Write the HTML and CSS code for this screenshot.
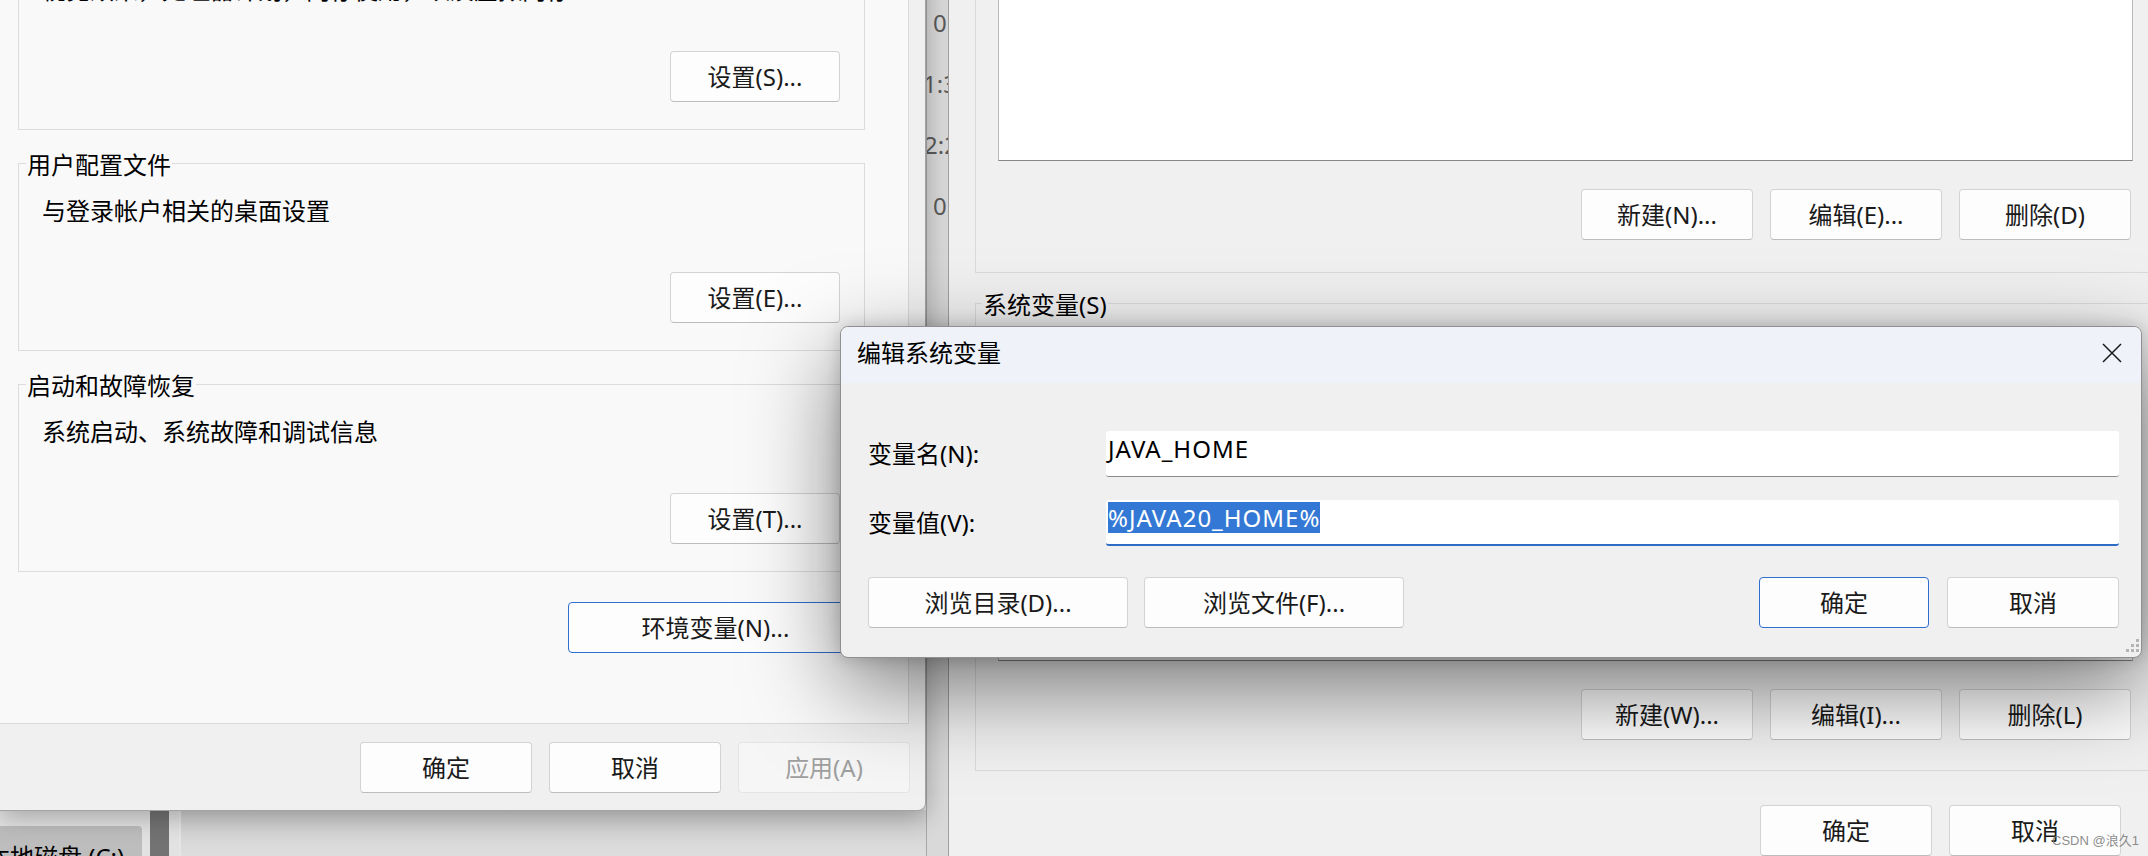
FILE: index.html
```html
<!DOCTYPE html>
<html lang="zh-CN">
<head>
<meta charset="utf-8">
<title>编辑系统变量</title>
<link rel="stylesheet" href="styles.css">
</head>
<body>
<div class="bgwin">
  <div class="bgmain">
    <div class="bgbottom">
      <div class="drive">本地磁盘 (C:)</div>
      <div class="split"></div>
      <div class="rest"></div>
    </div>
  </div>
  <div class="timecol">
    <div class="tl i1">0:</div>
    <div class="tl i2">1:3</div>
    <div class="tl i3">2:2</div>
    <div class="tl i1">0:</div>
  </div>
</div>

<div class="sysprop">
  <div class="tabpage">
    <div class="sp-group">
      <div class="group-title">性能</div>
      <div class="desc">视觉效果，处理器计划，内存使用，以及虚拟内存</div>
      <button class="btn set">设置(S)...</button>
    </div>
    <div class="sp-group">
      <div class="group-title">用户配置文件</div>
      <div class="desc">与登录帐户相关的桌面设置</div>
      <button class="btn set">设置(E)...</button>
    </div>
    <div class="sp-group">
      <div class="group-title">启动和故障恢复</div>
      <div class="desc">系统启动、系统故障和调试信息</div>
      <button class="btn set">设置(T)...</button>
    </div>
    <div class="envrow">
      <button class="btn btn-default envbtn">环境变量(N)...</button>
    </div>
  </div>
  <div class="sp-footer">
    <button class="btn fbtn">确定</button>
    <button class="btn fbtn">取消</button>
    <button class="btn fbtn disabled">应用(A)</button>
  </div>
</div>

<div class="envdlg">
  <div class="ev-group g1">
    <div class="group-title">用户变量(U)</div>
    <div class="listbox lb1"></div>
    <div class="btnrow">
      <button class="btn ebtn">新建(N)...</button>
      <button class="btn ebtn">编辑(E)...</button>
      <button class="btn ebtn">删除(D)</button>
    </div>
  </div>
  <div class="ev-group g2">
    <div class="group-title">系统变量(S)</div>
    <div class="listbox lb2"></div>
    <div class="btnrow">
      <button class="btn ebtn">新建(W)...</button>
      <button class="btn ebtn">编辑(I)...</button>
      <button class="btn ebtn">删除(L)</button>
    </div>
  </div>
  <div class="ev-footer">
    <button class="btn ebtn">确定</button>
    <button class="btn ebtn">取消</button>
  </div>
</div>

<div class="editdlg">
  <div class="titlebar">
    <span class="title">编辑系统变量</span>
    <svg class="close" width="20" height="20" viewBox="0 0 20 20"><path d="M1 1L19 19M19 1L1 19" stroke="#1a1a1a" stroke-width="1.5" fill="none"/></svg>
  </div>
  <div class="edit-body">
    <div class="row">
      <div class="lbl">变量名(N):</div>
      <div class="field">JAVA_HOME</div>
    </div>
    <div class="row row2">
      <div class="lbl">变量值(V):</div>
      <div class="field focus"><span class="sel">%JAVA20_HOME%</span></div>
    </div>
    <div class="edit-btns">
      <button class="btn wide">浏览目录(D)...</button>
      <button class="btn wide">浏览文件(F)...</button>
      <div class="spacer"></div>
      <button class="btn btn-default ok">确定</button>
      <button class="btn cancel">取消</button>
    </div>
  </div>
  <svg class="grip" width="15" height="15" viewBox="0 0 15 15">
    <rect x="12" y="2" width="3" height="3" fill="#b4b4b4"/>
    <rect x="7" y="7" width="3" height="3" fill="#b4b4b4"/>
    <rect x="12" y="7" width="3" height="3" fill="#b4b4b4"/>
    <rect x="2" y="12" width="3" height="3" fill="#b4b4b4"/>
    <rect x="7" y="12" width="3" height="3" fill="#b4b4b4"/>
    <rect x="12" y="12" width="3" height="3" fill="#b4b4b4"/>
  </svg>
</div>

<div class="watermark">CSDN @浪久1</div>
</body>
</html>
```

FILE: styles.css
```css
* { box-sizing: border-box; }
html, body { margin: 0; }
body {
  width: 2148px;
  height: 856px;
  overflow: hidden;
  position: relative;
  background: #dcdcdc;
  font-family: "Noto Sans", "Noto Sans CJK SC", sans-serif;
  font-size: 24px;
  line-height: 34px;
  color: #000;
}

/* ---------- buttons ---------- */
.btn {
  font: inherit;
  line-height: 34px;
  color: #1a1a1a;
  height: 51px;
  padding: 0;
  background: #fdfdfd;
  border: 1px solid #d3d3d3;
  border-bottom-color: #bcbcbc;
  border-radius: 4px;
  display: flex;
  align-items: center;
  justify-content: center;
  white-space: nowrap;
}
.btn-default { border-color: #2f6fcf; }
.btn.disabled {
  background: #f6f6f6;
  border-color: #e4e4e4;
  color: #9f9f9f;
}

/* ---------- background window ---------- */
.bgwin {
  position: absolute;
  left: 0;
  top: 0;
  width: 948px;
  height: 856px;
  display: flex;
}
.bgmain {
  flex: 1;
  display: flex;
  flex-direction: column;
  justify-content: flex-end;
  background: #e2e2e2;
}
.bgbottom {
  height: 46px;
  display: flex;
}
.drive {
  width: 142px;
  margin-top: 16px;
  padding-top: 14px;
  background: #bdbdbd;
  border-top-right-radius: 4px;
  text-indent: -14px;
  white-space: nowrap;
  overflow: hidden;
}
.split {
  width: 19px;
  margin-left: 8px;
  background: #737373;
}
.rest {
  flex: 1;
  margin-left: 10px;
  border-left: 2px solid #e6e6e6;
  background: linear-gradient(#cdcdcd, #dedede);
}
.timecol {
  width: 22px;
  background: #d9d9d9;
  border-left: 1px solid #a8a8a8;
  overflow: hidden;
  color: #5a5a5a;
}
.tl {
  height: 61px;
  line-height: 61px;
  white-space: nowrap;
}
.tl:first-child { margin-top: -8px; }
.tl.i1 { text-indent: 6px; }
.tl.i2 { text-indent: -4px; }
.tl.i3 { text-indent: -3px; }

/* ---------- system properties dialog ---------- */
.sysprop {
  position: absolute;
  left: 0;
  top: -100px;
  width: 926px;
  background: #f0f0f0;
  border-right: 1px solid #a3a3a3;
  border-bottom: 1px solid #a3a3a3;
  border-bottom-right-radius: 8px;
  box-shadow: 0 6px 26px rgba(0, 0, 0, 0.28);
}
.tabpage {
  width: 909px;
  background: #f9f9f9;
  border-right: 1px solid #dadada;
  border-bottom: 1px solid #dadada;
  padding-top: 42px;
  padding-bottom: 70px;
}
.sp-group {
  position: relative;
  margin-left: 18px;
  width: 847px;
  height: 188px;
  border: 1px solid #dcdcdc;
  padding: 30px 24px 27px 23px;
  display: flex;
  flex-direction: column;
}
.sp-group + .sp-group { margin-top: 33px; }
.group-title {
  position: absolute;
  top: -16px;
  left: 7px;
  padding: 0 1px;
  line-height: 34px;
  white-space: nowrap;
}
.sp-group .group-title { background: #f9f9f9; }
.desc { white-space: nowrap; }
.btn.set {
  width: 170px;
  margin-top: auto;
  align-self: flex-end;
}
.envrow {
  margin-top: 30px;
  display: flex;
  justify-content: flex-end;
  padding-right: 45px;
}
.envbtn { width: 295px; }
.sp-footer {
  display: flex;
  justify-content: flex-end;
  gap: 17px;
  padding: 18px 15px 17px 0;
}
.fbtn { width: 172px; }

/* ---------- environment variables dialog ---------- */
.envdlg {
  position: absolute;
  left: 948px;
  top: -200px;
  width: 1200px;
  height: 1056px;
  overflow: hidden;
  background: #f0f0f0;
  border-left: 1px solid #9f9f9f;
  padding-left: 26px;
  padding-top: 40px;
}
.ev-group {
  position: relative;
  width: 1181px;
  border: 1px solid #dadada;
  padding: 30px 22px 32px 22px;
  display: flex;
  flex-direction: column;
}
.ev-group .group-title { background: #f0f0f0; left: 6px; }
.ev-group.g2 {
  margin-top: 30px;
  padding-top: 32px;
  padding-bottom: 30px;
}
.listbox {
  background: #fff;
  border: 1px solid #b9b9b9;
  border-bottom-color: #868686;
}
.lb1 { height: 290px; }
.lb2 { height: 325px; }
.btnrow {
  margin-top: 28px;
  display: flex;
  justify-content: flex-end;
  gap: 17px;
  padding-right: 2px;
}
.ebtn { width: 172px; }
.ev-footer {
  width: 1181px;
  margin-top: 34px;
  display: flex;
  justify-content: flex-end;
  gap: 17px;
  padding-right: 35px;
}

/* ---------- edit dialog ---------- */
.editdlg {
  position: absolute;
  left: 840px;
  top: 326px;
  width: 1302px;
  background: #f0f0f0;
  border: 1px solid #8f8f8f;
  border-radius: 8px;
  box-shadow: 0 30px 90px rgba(0, 0, 0, 0.5), 0 0 18px rgba(0, 0, 0, 0.18);
}
.titlebar {
  height: 56px;
  background: #eff3f9;
  border-radius: 7px 7px 0 0;
  display: flex;
  align-items: center;
  justify-content: space-between;
  padding: 0 19px 4px 16px;
}
.close { display: block; }
.edit-body {
  padding: 48px 22px 29px 27px;
}
.row {
  display: flex;
  align-items: center;
}
.row2 { margin-top: 23px; }
.lbl {
  width: 238px;
  white-space: nowrap;
}
.field {
  flex: 1;
  height: 46px;
  background: #fff;
  border-radius: 3px;
  border-bottom: 1px solid #8a8a8a;
  padding: 2px 2px 0;
  line-height: 31px;
  letter-spacing: 1px;
  white-space: nowrap;
}
.field.focus {
  border-bottom: 2px solid #2c6cc4;
}
.sel {
  display: inline-block;
  background: #3378d4;
  color: #fff;
  height: 31px;
  line-height: 31px;
}
.edit-btns {
  margin-top: 31px;
  display: flex;
}
.btn.wide { width: 260px; }
.btn.wide + .btn.wide { margin-left: 16px; }
.spacer { flex: 1; }
.btn.ok { width: 170px; }
.btn.cancel { width: 172px; margin-left: 18px; }
.grip {
  position: absolute;
  right: 2px;
  bottom: 5px;
}

/* ---------- watermark ---------- */
.watermark {
  position: absolute;
  left: 2052px;
  top: 832px;
  font-family: "Liberation Sans", "Noto Sans CJK SC", sans-serif;
  font-size: 13px;
  line-height: 18px;
  color: rgba(125, 125, 125, 0.9);
  white-space: nowrap;
}
```
